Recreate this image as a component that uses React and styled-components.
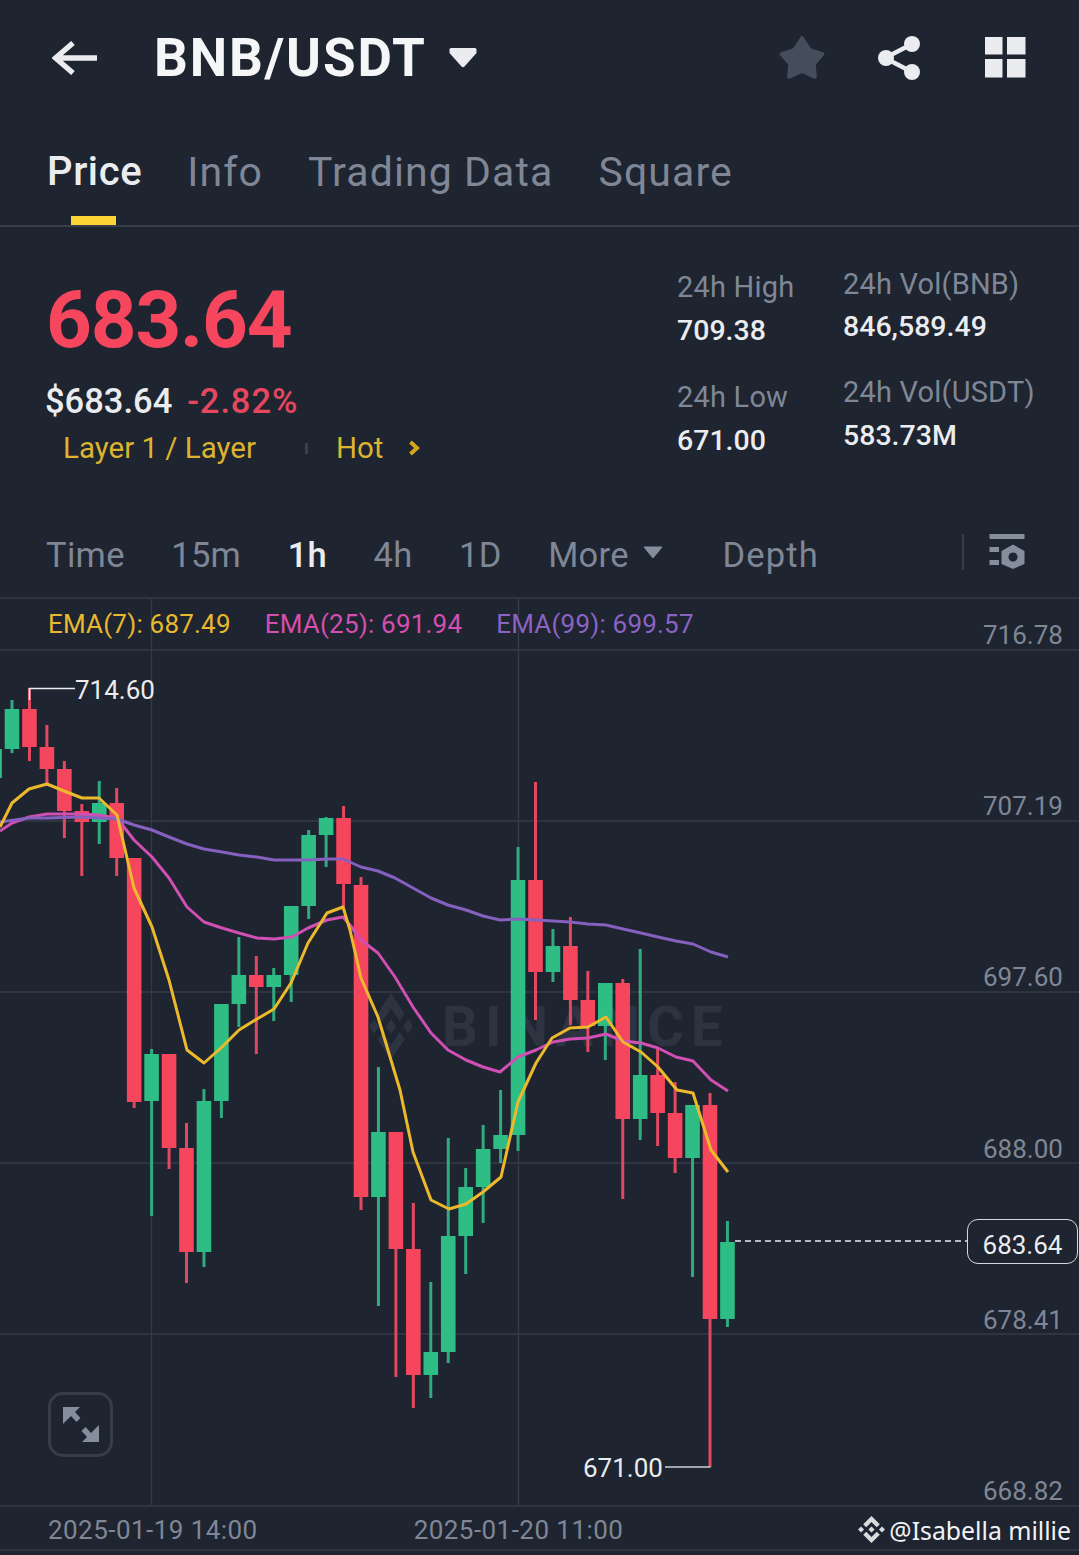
import styled, { createGlobalStyle } from "styled-components";

const GlobalStyle = createGlobalStyle`
    html, body {
        margin: 0;
        padding: 0;
        background: #1e2430;
    }
    * {
        box-sizing: border-box;
    }
`;

// [high, bodyTop, bodyBottom, low, colour], one candle each 17.45px from x=-5.45
const candles = [
    [749, 749, 778, 778, "g"],
    [700, 709, 749, 753, "g"],
    [688, 709, 747, 761, "r"],
    [725, 747, 769, 783, "r"],
    [761, 769, 811, 838, "r"],
    [804, 811, 822, 876, "r"],
    [781, 803, 822, 844, "g"],
    [788, 803, 858, 876, "r"],
    [858, 858, 1102, 1108, "r"],
    [1049, 1054, 1101, 1216, "g"],
    [1054, 1054, 1148, 1169, "r"],
    [1123, 1148, 1252, 1283, "r"],
    [1089, 1101, 1252, 1267, "g"],
    [1004, 1004, 1101, 1118, "g"],
    [937, 975, 1004, 1027, "g"],
    [956, 975, 987, 1054, "r"],
    [968, 975, 987, 1021, "g"],
    [906, 906, 975, 1002, "g"],
    [830, 835, 906, 919, "g"],
    [817, 818, 835, 867, "g"],
    [806, 818, 884, 907, "r"],
    [877, 885, 1197, 1210, "r"],
    [1067, 1132, 1197, 1306, "g"],
    [1132, 1132, 1249, 1377, "r"],
    [1203, 1249, 1375, 1408, "r"],
    [1282, 1352, 1375, 1398, "g"],
    [1138, 1236, 1352, 1363, "g"],
    [1168, 1187, 1236, 1274, "g"],
    [1125, 1149, 1187, 1223, "g"],
    [1090, 1135, 1149, 1163, "g"],
    [847, 880, 1135, 1151, "g"],
    [782, 880, 972, 1020, "r"],
    [929, 946, 972, 982, "g"],
    [917, 946, 1000, 1025, "r"],
    [971, 1000, 1026, 1052, "r"],
    [983, 983, 1026, 1060, "g"],
    [979, 983, 1119, 1199, "r"],
    [949, 1075, 1119, 1140, "g"],
    [1048, 1075, 1113, 1146, "r"],
    [1082, 1113, 1158, 1173, "r"],
    [1105, 1105, 1158, 1277, "g"],
    [1093, 1105, 1319, 1467, "r"],
    [1221, 1242, 1319, 1327, "g"],
];

const ema7 = "0,827 12,803 29,789 47,784 64,791 82,798 99,798 117,815 134,888 152,927 169,980 187,1050 204,1063 222,1047 239,1030 257,1019 274,1009 291,983 308,943 327,913 343,907 350,930 361,978 378,1017 400,1090 413,1152 431,1200 449,1209 466,1204 483,1192 501,1177 518,1102 536,1063 552,1038 570,1028 588,1027 606,1017 623,1042 641,1052 658,1067 677,1090 693,1093 711,1150 728,1172";
const ema25 = "0,831 12,823 29,817 47,814 82,814 98,815 117,818 134,840 152,857 169,878 187,907 204,922 222,928 239,933 257,938 274,939 292,937 308,928 327,920 343,917 350,925 361,940 378,953 395,977 413,1007 431,1033 448,1050 466,1060 483,1067 500,1072 518,1057 536,1050 553,1042 570,1039 588,1038 606,1034 623,1041 641,1043 658,1048 676,1057 693,1061 711,1080 728,1091";
const ema99 = "0,822 29,818 47,818 82,817 117,819 134,825 152,830 169,837 187,844 204,849 222,852 239,855 257,857 274,860 292,860 308,860 327,859 343,859 361,867 378,871 395,878 413,888 431,898 448,905 466,910 483,916 500,920 518,919 536,920 553,921 570,922 588,924 606,925 623,929 641,933 658,937 676,941 693,944 711,952 728,957";

const gridRows = [650, 821, 992, 1163, 1334];
const axisPrices = ["716.78", "707.19", "697.60", "688.00", "678.41", "668.82"];
const timeframes = ["Time", "15m", "1h", "4h", "1D"];
const tabs = ["Price", "Info", "Trading Data", "Square"];

function BinanceMark({ width, height, color }) {
    return (
        <svg width={width} height={height} viewBox="0 0 126.61 126.61" preserveAspectRatio="none" fill={color}>
            <path d="m38.73 53.2 24.59-24.58 24.6 24.6 14.3-14.31L63.32 0 24.43 38.9z" />
            <path d="m0 63.31 14.3-14.31 14.31 14.31-14.31 14.3z" />
            <path d="m38.73 73.41 24.59 24.59 24.6-24.6 14.31 14.29-38.9 38.91-38.91-38.88-.02-.02z" />
            <path d="m98 63.31 14.3-14.31 14.31 14.3-14.31 14.32z" />
            <path d="m77.83 63.3-14.51-14.52-10.73 10.73-1.24 1.23-2.54 2.54 14.51 14.5 14.51-14.52z" />
        </svg>
    );
}

function CandleChart() {
    return (
        <ChartDrawing viewBox="0 599 1079 906">
            {gridRows.map((y) => (
                <line key={y} x1="0" x2="1079" y1={y} y2={y} stroke="#343b47" strokeWidth="1.6" />
            ))}
            <line x1="151.5" x2="151.5" y1="599" y2="1505" stroke="#343b47" strokeWidth="1.4" />
            <line x1="518.5" x2="518.5" y1="599" y2="1505" stroke="#343b47" strokeWidth="1.4" />

            {candles.map(([high, top, bottom, low, side], i) => {
                const cx = -5.45 + 17.45 * i;
                const body = side === "g" ? "#2ebd85" : "#f6465d";
                const wick = side === "g" ? "#2fab7f" : "#e2485f";
                return (
                    <g key={i}>
                        <rect x={cx - 1.5} y={high} width="3" height={low - high} fill={wick} />
                        <rect x={cx - 7.3} y={top} width="14.6" height={bottom - top} fill={body} />
                    </g>
                );
            })}

            <polyline points={ema25} fill="none" stroke="#d04fb2" strokeWidth="3" strokeLinejoin="round" />
            <polyline points={ema99} fill="none" stroke="#8560bf" strokeWidth="3" strokeLinejoin="round" />
            <polyline points={ema7} fill="none" stroke="#edb92c" strokeWidth="3" strokeLinejoin="round" />

            <polyline points="29.5,700 29.5,688.5 75,688.5" fill="none" stroke="#eaecef" strokeWidth="1.6" />
            <polyline points="665,1467 710.5,1467" fill="none" stroke="#cfd2d6" strokeWidth="1.6" />
            <line x1="735" x2="967" y1="1241" y2="1241" stroke="#eaecef" strokeWidth="1.6" strokeDasharray="6 4" />
        </ChartDrawing>
    );
}

export default function App() {
    return (
        <Page>
            <GlobalStyle />

            <Header>
                <BackIcon viewBox="52 40 48 34" width="48" height="34">
                    <path d="M73 42 55.5 57 73 72M56 57h41" fill="none" stroke="#eaecef" strokeWidth="5.4" />
                </BackIcon>
                <Title>BNB/USDT</Title>
                <TitleCaret viewBox="0 0 28 21" width="28" height="21">
                    <path d="M2 1h24q1.500 0 1.500 1.500V6L15.500 19.500q-1.500 1.500-3 0L.5 6V2.500Q.5 1 2 1z" fill="#eaecef" />
                </TitleCaret>
                <HeaderIcons>
                    <svg viewBox="780 35 46 45" width="46" height="45">
                        <path
                            d="M803 38 811 50 823.5 54 815 64 816 77 803 71 790 77 791 64 782.5 54 795 50z"
                            fill="#444d5c"
                            stroke="#444d5c"
                            strokeWidth="3.6"
                            strokeLinejoin="round"
                        />
                    </svg>
                    <svg viewBox="877 34 44 46" width="44" height="46">
                        <path d="M912 43 885 57 912 71" fill="none" stroke="#eaecef" strokeWidth="4.5" />
                        <circle cx="912" cy="43" r="8" fill="#eaecef" />
                        <circle cx="886" cy="57" r="8" fill="#eaecef" />
                        <circle cx="912" cy="71" r="8" fill="#eaecef" />
                    </svg>
                    <svg viewBox="985 37 41 41" width="41" height="41" fill="#eaecef">
                        <rect x="985" y="37" width="17.5" height="17.5" />
                        <rect x="1007" y="37" width="18.5" height="17.5" />
                        <rect x="985" y="59" width="17.5" height="18.5" />
                        <rect x="1007" y="59" width="18.5" height="18.5" />
                    </svg>
                </HeaderIcons>
            </Header>

            <Tabs>
                {tabs.map((tab, i) => (
                    <Tab key={tab} $active={i === 0}>{tab}</Tab>
                ))}
            </Tabs>

            <Stats>
                <PriceBlock>
                    <BigPrice>683.64</BigPrice>
                    <SubPrice>
                        <Usd>$683.64</Usd>
                        <Change>-2.82%</Change>
                    </SubPrice>
                    <TagRow>
                        <span>Layer 1 / Layer</span>
                        <TagDivider />
                        <span>Hot</span>
                        <svg viewBox="0 0 12 16" width="12" height="16">
                            <path d="M2.5 2 9 8l-6.500 6" fill="none" stroke="#d6a51c" strokeWidth="4" />
                        </svg>
                    </TagRow>
                </PriceBlock>
                <StatColumn $top={40} $gap={26} $width={166}>
                    <Stat>
                        <StatLabel>24h High</StatLabel>
                        <StatValue $gap={4}>709.38</StatValue>
                    </Stat>
                    <Stat>
                        <StatLabel>24h Low</StatLabel>
                        <StatValue $gap={4}>671.00</StatValue>
                    </Stat>
                </StatColumn>
                <StatColumn $top={37} $gap={25}>
                    <Stat>
                        <StatLabel>24h Vol(BNB)</StatLabel>
                        <StatValue $gap={3}>846,589.49</StatValue>
                    </Stat>
                    <Stat>
                        <StatLabel>24h Vol(USDT)</StatLabel>
                        <StatValue $gap={4}>583.73M</StatValue>
                    </Stat>
                </StatColumn>
            </Stats>

            <Toolbar>
                {timeframes.map((item) => (
                    <ToolItem key={item} $active={item === "1h"}>{item}</ToolItem>
                ))}
                <MoreItem>
                    More
                    <svg viewBox="0 0 20 13" width="20" height="13">
                        <path d="M1 1h18L10 12z" fill="#848e9c" stroke="#848e9c" strokeWidth="1" strokeLinejoin="round" />
                    </svg>
                </MoreItem>
                <DepthItem>Depth</DepthItem>
                <ToolDivider />
                <svg viewBox="990 535 37 36" width="37" height="36" fill="#848e9c">
                    <rect x="990.500" y="536" width="35" height="5" />
                    <rect x="990.500" y="549" width="9.500" height="5" />
                    <rect x="990.500" y="562" width="9.500" height="5" />
                    <path
                        fillRule="evenodd"
                        d="M1014 546.500 1025.500 553v13L1014 571 1002.500 566v-13zM1014 554.500a4.500 4.500 0 1 0 .01 0z"
                    />
                </svg>
            </Toolbar>

            <Chart>
                <Watermark>
                    <BinanceMark width={44} height={67} color="#2d3340" />
                    <WatermarkText>BINANCE</WatermarkText>
                </Watermark>
                <CandleChart />
                <Legend>
                    <LegendItem $color="#e8b82e">EMA(7): 687.49</LegendItem>
                    <LegendItem $color="#d44fae">EMA(25): 691.94</LegendItem>
                    <LegendItem $color="#8a63c4">EMA(99): 699.57</LegendItem>
                </Legend>
                <Axis>
                    {axisPrices.map((price) => (
                        <AxisLabel key={price}>{price}</AxisLabel>
                    ))}
                </Axis>
                <Extreme $left={75} $top={75}>714.60</Extreme>
                <Extreme $left={583} $top={853}>671.00</Extreme>
                <LastPrice>683.64</LastPrice>
                <ExpandButton>
                    <svg viewBox="62 1407 38 37" width="38" height="37" fill="#848e9c">
                        <path d="M63 1408h17l-5 5 5.500 6-4 4-5.500-6-8 8z" />
                        <path d="M99 1443H82l5-5-5.500-6 4-4 5.500 6 8-8z" />
                    </svg>
                </ExpandButton>
            </Chart>

            <Footer>
                <DateLabel>2025-01-19 14:00</DateLabel>
                <DateLabel>2025-01-20 11:00</DateLabel>
                <Credit>
                    <BinanceMark width={27} height={27} color="#d8dadd" />
                    <span>@Isabella millie</span>
                </Credit>
            </Footer>
        </Page>
    );
}

const Page = styled.div`
    width: 1079px;
    height: 1555px;
    background: #1e2430;
    overflow: hidden;
    font-family: Roboto, "Noto Sans", sans-serif;
`;

const Header = styled.div`
    height: 115px;
    display: flex;
    align-items: center;
    padding-left: 52px;
`;

const BackIcon = styled.svg`
    margin-right: 54px;
`;

const Title = styled.h1`
    margin: 0;
    font-size: 53px;
    font-weight: 700;
    line-height: 60px;
    letter-spacing: 1.85px;
    color: #f5f6f7;
`;

const TitleCaret = styled.svg`
    margin: 0 0 0 22px;
`;

const HeaderIcons = styled.div`
    margin-left: auto;
    padding-right: 53px;
    display: flex;
    align-items: center;
    gap: 52px;

    svg:nth-child(2) {
        margin-right: 12px;
    }
`;

const Tabs = styled.div`
    height: 112px;
    padding: 33px 0 0 47px;
    display: flex;
    align-items: flex-start;
    gap: 45px;
    border-bottom: 2px solid #373e4a;
`;

const Tab = styled.div`
    position: relative;
    font-size: ${(p) => (p.$active ? "40px" : "41px")};
    line-height: 48px;
    letter-spacing: ${(p) => (p.$active ? "0.6px" : "1.1px")};
    font-weight: ${(p) => (p.$active ? 500 : 400)};
    color: ${(p) => (p.$active ? "#eaecef" : "#7f8796")};

    &::after {
        content: "";
        display: ${(p) => (p.$active ? "block" : "none")};
        position: absolute;
        top: 68px;
        left: 24px;
        width: 45px;
        height: 9px;
        background: #fcd535;
    }
`;

const Stats = styled.div`
    height: 293px;
    display: flex;
    padding-left: 46px;
`;

const PriceBlock = styled.div`
    width: 631px;
    padding-top: 53px;
`;

const BigPrice = styled.div`
    font-size: 80px;
    line-height: 80px;
    font-weight: 700;
    letter-spacing: -1.2px;
    color: #f6465d;
`;

const SubPrice = styled.div`
    margin: 19px 0 0 -1px;
    display: flex;
    gap: 15px;
    font-size: 34.5px;
    line-height: 44px;
`;

const Usd = styled.span`
    font-weight: 500;
    color: #eaecef;
`;

const Change = styled.span`
    font-weight: 500;
    letter-spacing: 0.9px;
    color: #e5475f;
`;

const TagRow = styled.div`
    margin: 7px 0 0 17px;
    display: flex;
    align-items: center;
    font-size: 29.5px;
    line-height: 36px;
    color: #dcb42f;

    svg {
        margin-left: 24px;
    }
`;

const TagDivider = styled.i`
    width: 3px;
    height: 11px;
    margin: 0 28px 0 49px;
    background: #3a414d;
`;

const StatColumn = styled.div`
    width: ${(p) => (p.$width ? `${p.$width}px` : "auto")};
    padding-top: ${(p) => p.$top}px;
    display: flex;
    flex-direction: column;
    gap: ${(p) => p.$gap}px;
`;

const Stat = styled.div`
    display: flex;
    flex-direction: column;
`;

const StatLabel = styled.span`
    font-size: 29px;
    line-height: 40px;
    letter-spacing: 0.2px;
    color: #7f8796;
`;

const StatValue = styled.span`
    font-size: 28.5px;
    line-height: 40px;
    font-weight: 500;
    margin-top: ${(p) => p.$gap}px;
    color: #eaecef;
`;

const Toolbar = styled.div`
    height: 79px;
    padding: 13px 53px 0 46px;
    display: flex;
    align-items: flex-start;
    gap: 46.5px;
    border-bottom: 2px solid #2e3540;
`;

const ToolItem = styled.div`
    font-size: 34.5px;
    line-height: 44px;
    letter-spacing: 0.3px;
    font-weight: ${(p) => (p.$active ? 500 : 400)};
    color: ${(p) => (p.$active ? "#eaecef" : "#7f8796")};
`;

const MoreItem = styled(ToolItem)`
    display: flex;
    align-items: center;
    gap: 14px;

    svg {
        margin-top: -6px;
    }
`;

const DepthItem = styled(ToolItem)`
    margin-left: 13px;
    letter-spacing: 1.2px;
`;

const ToolDivider = styled.i`
    width: 2px;
    height: 36px;
    margin: 1px -21.5px 0 auto;
    background: #373e4a;
`;

const Chart = styled.div`
    position: relative;
    height: 906px;
`;

const ChartDrawing = styled.svg`
    position: absolute;
    inset: 0;
    width: 100%;
    height: 100%;
    z-index: 1;
`;

const Watermark = styled.div`
    position: absolute;
    left: 369px;
    top: 394px;
    display: flex;
    align-items: center;
    gap: 29px;
`;

const WatermarkText = styled.span`
    font-size: 56px;
    line-height: 60px;
    font-weight: 700;
    letter-spacing: 7.2px;
    color: #2d3340;
`;

const Legend = styled.div`
    position: relative;
    z-index: 2;
    height: 50px;
    padding-left: 48px;
    display: flex;
    align-items: center;
    gap: 34px;
`;

const LegendItem = styled.span`
    font-size: 26px;
    letter-spacing: 0.2px;
    color: ${(p) => p.$color};
`;

const Axis = styled.div`
    position: absolute;
    z-index: 2;
    left: 983px;
    top: 20px;
    bottom: -2px;
    display: flex;
    flex-direction: column;
    justify-content: space-between;
`;

const AxisLabel = styled.span`
    font-size: 26px;
    line-height: 32px;
    color: #7f8796;
`;

const Extreme = styled.span`
    position: absolute;
    z-index: 2;
    left: ${(p) => p.$left}px;
    top: ${(p) => p.$top}px;
    font-size: 26px;
    line-height: 32px;
    color: #eaecef;
`;

const LastPrice = styled.div`
    position: absolute;
    z-index: 2;
    left: 967px;
    top: 620px;
    width: 111px;
    height: 45px;
    padding-top: 6px;
    display: flex;
    align-items: center;
    justify-content: center;
    border: 1.500px solid #d5d8dc;
    border-radius: 11px;
    background: #1e2430;
    font-size: 26px;
    color: #eaecef;
`;

const ExpandButton = styled.div`
    position: absolute;
    z-index: 2;
    left: 48px;
    top: 793px;
    width: 65px;
    height: 65px;
    display: flex;
    align-items: center;
    justify-content: center;
    border: 3px solid #363d49;
    border-radius: 15px;
`;

const Footer = styled.div`
    height: 46px;
    padding: 3px 8px 0 48px;
    display: flex;
    align-items: center;
    gap: 156px;
    border-top: 2px solid #2e3540;
    border-bottom: 2px solid #2e3540;
`;

const DateLabel = styled.span`
    font-size: 26px;
    letter-spacing: 0.45px;
    color: #7f8796;
`;

const Credit = styled.div`
    margin-left: auto;
    display: flex;
    align-items: center;
    gap: 4px;
    font-family: "Noto Sans", sans-serif;
    font-size: 24.8px;
    line-height: 32px;
    color: #f2f3f4;
`;
